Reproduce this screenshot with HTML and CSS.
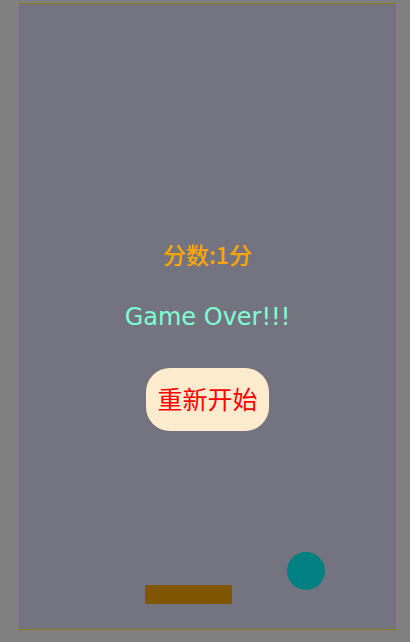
FILE: index.html
```html
<!DOCTYPE html>
<html lang="zh">
<head>
<meta charset="utf-8">
<title>弹球</title>
<link rel="stylesheet" href="styles.css">
</head>
<body>
  <main class="stage">
    <div class="overlay">
      <p class="score">分数:1分</p>
      <p class="game-over">Game Over!!!</p>
      <button class="restart" type="button">重新开始</button>
    </div>
    <!-- game pieces sit at their own coordinates on the board -->
    <div class="ball"></div>
    <div class="paddle"></div>
  </main>
</body>
</html>
```
FILE: styles.css
```css
html, body {
  margin: 0;
  padding: 0;
  background: #808080;
}

body {
  padding: 3px 0 0 19px;
  font-family: "DejaVu Sans", "Noto Sans CJK SC", sans-serif;
}

.stage {
  position: relative;
  box-sizing: border-box;
  width: 377px;
  height: 627px;
  border: 1px solid #8c7a14;
  background: #747480;
}

.overlay {
  display: flex;
  flex-direction: column;
  align-items: center;
  padding-top: 235px;
}

.score {
  margin: 0;
  color: #ffa500;
  font-family: "Noto Sans CJK SC", sans-serif;
  font-size: 23px;
  font-weight: 500;
  line-height: 30px;
}

.game-over {
  margin: 33px 0 0;
  color: #7fffd4;
  font-family: "DejaVu Sans", sans-serif;
  font-size: 24px;
  line-height: 30px;
}

.restart {
  margin-top: 36px;
  width: 123px;
  height: 63px;
  border: none;
  border-radius: 24px;
  background: #ffebcd;
  color: #ff0000;
  font-family: "Noto Sans CJK SC", sans-serif;
  font-size: 25px;
  line-height: 30px;
  padding: 0 0 3px;
}

.ball {
  position: absolute;
  left: 267px;
  top: 548px;
  width: 38px;
  height: 38px;
  border-radius: 50%;
  background: #008080;
}

.paddle {
  position: absolute;
  left: 125px;
  top: 581px;
  width: 87px;
  height: 19px;
  background: #805500;
}
```
